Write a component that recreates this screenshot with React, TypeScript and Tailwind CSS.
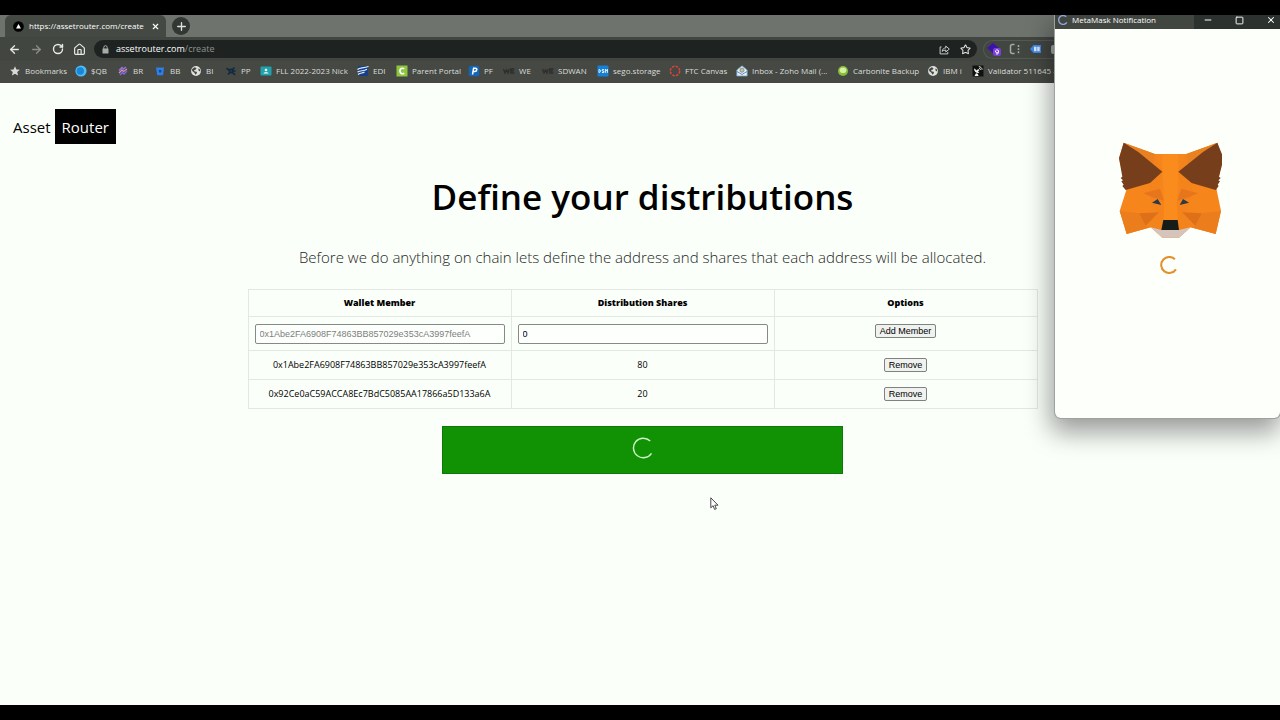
import type { ReactNode } from "react";
import {
  ArrowLeft,
  ArrowRight,
  House,
  Minus,
  Plus,
  RotateCw,
  Square,
  Star,
  X,
} from "lucide-react";

const StarSolid = () => (
  <svg viewBox="0 0 12 12" className="size-3" fill="#d9dbd7">
    <path d="M6 1.2 7.400 4.500l3.500.3-2.700 2.300.9 3.400L6 8.700 2.900 10.500l.9-3.400-2.700-2.300 3.500-.3z" />
  </svg>
);

const GlobeSolid = () => (
  <svg viewBox="0 0 12 12" className="size-3">
    <circle cx="6" cy="6" r="4.9" fill="#dfe1dd" />
    <path d="M2 4.2 4.5 2.3l2 .6-.6 1.5-1.8.9.6 1.2 2 .3.3 1.3-1.5 1.6-1.1-1.9L2.2 6zM8.2 3.6l1.7.6.3 2.3-1.5-.7z" fill="#454843" />
  </svg>
);

const DarkMark = () => (
  <svg viewBox="0 0 12 12" className="size-3" fill="none" stroke="#2b2e2b" strokeWidth="1.3">
    <path d="M.5 4 2 8l1.5-3L5 8l1.2-4M11.5 4H7.8v4h3.700M7.800 6h3" />
  </svg>
);

const bookmarks: { label: string; icon: ReactNode; width: string }[] = [
  { label: "Bookmarks", width: "w-[66px]", icon: <StarSolid /> },
  {
    label: "$QB",
    width: "w-[42px]",
    icon: (
      <svg viewBox="0 0 12 12" className="size-3">
        <circle cx="6" cy="6" r="5.6" fill="#4dbdf5" />
        <circle cx="5.300" cy="6" r="3.7" fill="#1a86d8" />
      </svg>
    ),
  },
  {
    label: "BR",
    width: "w-[37px]",
    icon: (
      <svg viewBox="0 0 12 12" className="size-3" fill="none" strokeWidth="1.3">
        <path d="m2 5.5 3-3 1.5 1.5 2.5-2" stroke="#8f7bea" />
        <path d="m2 8 3-3 1.5 1.5L10 4" stroke="#e48ac8" />
        <path d="m3 10 2.5-2.5L7 9l3-3" stroke="#7c6ee0" />
      </svg>
    ),
  },
  {
    label: "BB",
    width: "w-[36px]",
    icon: (
      <svg viewBox="0 0 12 12" className="size-3">
        <path d="M2 2.5h8L9 10.2H3.2z" fill="#2d7fea" />
        <path d="M4.7 5h2.8L7 7.6H5.2z" fill="#16458f" />
      </svg>
    ),
  },
  { label: "BI", width: "w-[35px]", icon: <GlobeSolid /> },
  {
    label: "PP",
    width: "w-[35px]",
    icon: (
      <svg viewBox="0 0 12 12" className="size-3" stroke="#10293c" strokeWidth="1.6" fill="none">
        <path d="M1.5 3.5 6 6l4 4M3 9.5 6 6l3.5-3.5M6 6h4.5" />
        <circle cx="6" cy="6" r="1.6" fill="#1b4f78" />
      </svg>
    ),
  },
  {
    label: "FLL 2022-2023 Nick",
    width: "w-[97px]",
    icon: (
      <svg viewBox="0 0 12 12" className="size-3">
        <rect x=".5" y="1.5" width="11" height="9" rx="1" fill="#1fa3ad" />
        <circle cx="6" cy="5" r="1.3" fill="#fff" />
        <path d="M3.4 8.6c.3-1.7 4.9-1.7 5.2 0z" fill="#fff" />
      </svg>
    ),
  },
  {
    label: "EDI",
    width: "w-[39px]",
    icon: (
      <svg viewBox="0 0 12 12" className="size-3">
        <path d="M1 1h10v10H2z" fill="#153f86" />
        <path d="M.5 4.5C3 2.5 6 3.5 11.5 1.5M.5 7C4 5 6 6.5 10 4.2M1 9.5c3-2 4-1 6.5-2.5" stroke="#e7f0fa" strokeWidth="1.2" fill="none" />
      </svg>
    ),
  },
  {
    label: "Parent Portal",
    width: "w-[72px]",
    icon: (
      <svg viewBox="0 0 12 12" className="size-3">
        <rect x=".5" y=".5" width="11" height="11" fill="#8dc63f" />
        <path d="M8.3 3.8C6 2.4 3.9 3.9 3.9 6s2.1 3.6 4.4 2.2" stroke="#fff" strokeWidth="1.7" fill="none" />
      </svg>
    ),
  },
  {
    label: "PF",
    width: "w-[35px]",
    icon: (
      <svg viewBox="0 0 12 12" className="size-3">
        <rect x=".8" y=".8" width="10.4" height="10.4" rx="2" fill="#1467b8" />
        <path d="M4.5 9.5 5.6 3.2h1.7c2.4.2 1.7 3.3-.5 3.3H5.2" stroke="#fff" strokeWidth="1.5" fill="none" />
      </svg>
    ),
  },
  { label: "WE", width: "w-[39px]", icon: <DarkMark /> },
  { label: "SDWAN", width: "w-[55px]", icon: <DarkMark /> },
  {
    label: "sego.storage",
    width: "w-[72px]",
    icon: (
      <svg viewBox="0 0 12 12" className="size-3">
        <rect x=".5" y=".5" width="11" height="11" rx="1" fill="#1580d8" />
        <path d="M2 4.5v3c2 .2 2-3.2 0-3M6.9 4.5H5.3V6h1.5v1.5H5M8.4 7.8V4.3l1 1.5 1-1.5v3.5" stroke="#fff" strokeWidth=".9" fill="none" />
      </svg>
    ),
  },
  {
    label: "FTC Canvas",
    width: "w-[67px]",
    icon: (
      <svg viewBox="0 0 12 12" className="size-3" fill="none" stroke="#d8453b">
        <circle cx="6" cy="6" r="4.7" strokeWidth="1.5" strokeDasharray="2.6 1.09" />
      </svg>
    ),
  },
  {
    label: "Inbox - Zoho Mail (...",
    width: "w-[101px]",
    icon: (
      <svg viewBox="0 0 12 12" className="size-3">
        <path d="M.8 5 6 .8 11.2 5v6H.8z" fill="#e8f0f6" stroke="#6c9ac0" strokeWidth=".8" />
        <circle cx="6" cy="5.2" r="2.1" fill="#d8b982" stroke="#4c82b0" strokeWidth=".7" />
        <path d="m1 6.5 5 3 5-3" fill="none" stroke="#4c82b0" strokeWidth=".9" />
      </svg>
    ),
  },
  {
    label: "Carbonite Backup",
    width: "w-[90px]",
    icon: (
      <svg viewBox="0 0 12 12" className="size-3">
        <circle cx="6" cy="6" r="5" fill="#86bd3a" />
        <ellipse cx="6" cy="5.2" rx="3.300" ry="2.8" fill="#d9efa0" />
      </svg>
    ),
  },
  { label: "IBM i", width: "w-[45px]", icon: <GlobeSolid /> },
  {
    label: "Validator 511645 -",
    width: "w-[90px]",
    icon: (
      <svg viewBox="0 0 12 12" className="size-3">
        <rect x=".5" y=".5" width="11" height="11" fill="#101210" />
        <path d="M2 3.2c0 3.5 2.2 5.2 5.4 4.7L6 6.5 7.5 5 6 4 4.8 5.5zM4 8.3 2.5 11h4L5.8 8.8z" fill="#f4f6f3" />
        <path d="M6.8 1.6c1.9.1 3.2 1.4 3.3 3.2M7 3.2c1 .1 1.5.7 1.6 1.6" stroke="#f4f6f3" strokeWidth=".9" fill="none" />
      </svg>
    ),
  },
];

const members = [
  { address: "0x1Abe2FA6908F74863BB857029e353cA3997feefA", shares: 80 },
  { address: "0x92Ce0aC59ACCA8Ec7BdC5085AA17866a5D133a6A", shares: 20 },
];

function TabStrip() {
  return (
    <div className="flex h-[22px] items-stretch bg-[#6f736e]">
      <div className="ml-[5px] flex w-[161px] items-center rounded-t-md bg-[#454943] px-2 text-[8px] text-white">
        <svg viewBox="0 0 12 12" className="mr-[5px] size-[11px] shrink-0">
          <circle cx="6" cy="6" r="5.8" fill="#000" />
          <path d="m6 3.3 2.7 4.9H3.3z" fill="#fff" />
        </svg>
        <span className="flex-1 whitespace-nowrap">https://assetrouter.com/create</span>
        <button aria-label="Close tab" className="-mr-[3px] p-px">
          <X className="size-[9px]" strokeWidth={3} />
        </button>
      </div>
      <button
        aria-label="New tab"
        className="ml-[6px] flex size-[18px] items-center justify-center self-center rounded-full bg-[#333733] text-[#dfe1dd]"
      >
        <Plus className="size-[13px]" strokeWidth={2.5} />
      </button>
    </div>
  );
}

function Toolbar() {
  return (
    <div className="flex h-6 items-center bg-[#424641] pl-2 text-[#e8eae6]">
      <div className="flex w-[86px] items-center gap-[9px]">
        <button aria-label="Back">
          <ArrowLeft className="size-[13px]" strokeWidth={2.4} />
        </button>
        <button aria-label="Forward" className="text-[#8a8d88]">
          <ArrowRight className="size-[13px]" strokeWidth={2.4} />
        </button>
        <button aria-label="Reload">
          <RotateCw className="size-3" strokeWidth={2.8} />
        </button>
        <button aria-label="Home">
          <House className="size-[13px]" strokeWidth={2.2} />
        </button>
      </div>
      <div className="flex h-[18px] w-[883px] items-center rounded-full bg-[#1e2322] pr-[6px] pl-[7px]">
        <svg viewBox="0 0 9 9" className="mr-[6px] size-[9px]">
          <rect x="1.500" y="3.500" width="6" height="5" rx=".5" fill="#a9ada8" />
          <path d="M2.800 4V2.400a1.700 1.700 0 0 1 3.400 0V4" fill="none" stroke="#a9ada8" />
        </svg>
        <a href="#address" className="flex-1 text-[9px] text-[#8f938f]">
          <span className="text-white">assetrouter.com</span>/create
        </a>
        <button aria-label="Share" className="mr-[10px]">
          <svg viewBox="0 0 12 12" className="size-[11px]" fill="none" stroke="#d5d8d3">
            <path d="M2.8 3.2H1.2v7.6h8.4V8.6" />
            <path d="M3.5 8c.2-2.4 1.6-3.7 3.9-3.7V2.2l3.8 3.3-3.8 3.2V6.6C5.700 6.600 4.500 7 3.500 8z" strokeLinejoin="round" />
          </svg>
        </button>
        <button aria-label="Bookmark this page">
          <Star className="size-[11px]" strokeWidth={2.2} />
        </button>
      </div>
      <div className="ml-[6px] flex h-[19px] flex-1 items-center gap-[9px] rounded-l-full border border-r-0 border-[#555954] pl-[3px]">
        <svg viewBox="0 0 14 14" className="size-[14px]">
          <path d="M0 6 6 1l6 5-5 6z" fill="#3d12a8" />
          <rect x="6" y="6" width="8" height="8" rx="2" fill="#7a3fd8" />
          <path d="M11.500 9.200a1.500 1.500 0 1 0-.3 1.100M11.500 9v1.500c0 1.400-1.400 1.800-2.500 1.300" stroke="#fff" fill="none" />
        </svg>
        <svg viewBox="0 0 12 12" className="-ml-px size-3" fill="none" stroke="#a7aaa6" strokeWidth="1.500">
          <path d="M5.500 1.500H3.500Q1.500 1.500 1.500 3.500v5q0 2 2 2h2M9.500 2v2M9.500 5.200v1.800M9.500 8.300v2" />
        </svg>
        <svg viewBox="0 0 12 12" className="size-3">
          <path d="M0 6 3.500 2H11v8H3.500z" fill="#3f87e8" />
          <path d="M4 3.700h2.500v4.600H4zM7.200 3.700h2.500v4.600H7.200z" fill="#d7e7fb" />
        </svg>
        <svg viewBox="0 0 12 12" className="size-3">
          <rect y="2" width="11" height="9" rx="2" fill="#a7aaa6" />
        </svg>
      </div>
    </div>
  );
}

function Fox() {
  return (
    <svg viewBox="57 36 312 291" className="h-[97px] w-[104px]" role="img" aria-label="MetaMask">
      <path d="M74 38 168 72h94l93-34 14 47-16 95 13 63-16 69-75-20-35 31h-50l-35-31-72 20-21-69 20-63-22-95z" fill="#f6851b" />
      <path d="M74 38 168 72l22 53zM355 38 262 72l-24 53z" fill="#ea8120" />
      <path d="M190 72h48v53l-3 70 2 75h-44l2-75-5-70z" fill="#f98c1c" />
      <path d="m168 72 22 53-9 48 14 42-2 57-30-34-14-50zM262 72l-24 53 9 48-14 42 4 57 30-34 14-50z" fill="#f5831b" />
      <path d="m133 190 50-14 12 36-34-10zM297 190l-50-14-12 36 34-10z" fill="#e5761b" />
      <path d="m120 250 60-3-40 41zM309 250l-60-3 40 41z" fill="#df701a" />
      <path d="m62 243 58 7 20 38 15 4-72 20zM366 243l-57 7-20 38-14 4 75 20z" fill="#ec7d1c" />
      <path d="m180 247-40 41 15 4 32 8 6-30zM249 247l40 41-14 4-35 8-3-30z" fill="#f3831b" />
      <path d="M74 38 118 66l72 59-37 34-73 21-10-12 4-4-7-10 5-3-7-7 5-4-10-55z" fill="#763e1a" />
      <path d="M355 38 312 66l-74 59 40 34 72 21 9-12-3-4 7-10-5-3 7-7-5-4 14-55z" fill="#763e1a" />
      <path d="m159 218 17-11 11 18zM270 218l-18-11-10 18z" fill="#2b3a45" />
      <path d="m155 292 32 8h53l35-8-35 31h-50z" fill="#d5c4bb" />
      <path d="m193 270-6 30h53l-4-30z" fill="#161d18" />
    </svg>
  );
}

function Spinner({ className }: { className: string }) {
  return (
    <svg viewBox="0 0 22 22" className={className} fill="none" stroke="currentColor">
      <path d="M18.200 4A9.800 9.800 0 1 0 19.500 16.300" />
    </svg>
  );
}

function MetaMaskWindow() {
  return (
    <aside className="absolute top-0 right-0 flex h-[403px] w-[225px] flex-col overflow-hidden rounded-b-md bg-[#fcfffa] shadow-[-2px_12px_26px_2px_rgba(0,0,0,0.4)] ring-1 ring-[#9ca29c]">
      <div className="flex h-[14px] items-stretch bg-[#2c322d] text-white">
        <div className="flex w-[139px] items-center bg-[#424641] pb-1 pl-[3px] text-[8px] leading-[10px]">
          <Spinner className="mr-1 size-[10px] stroke-3 text-[#8fa6d8]" />
          MetaMask Notification
        </div>
        <div className="flex flex-1 items-center justify-between pr-1 pb-1 pl-[9px]">
          <button aria-label="Minimize"><Minus className="size-[10px]" strokeWidth={2.5} /></button>
          <button aria-label="Maximize"><Square className="size-[9px]" strokeWidth={2.5} /></button>
          <button aria-label="Close"><X className="size-[10px]" strokeWidth={2.5} /></button>
        </div>
      </div>
      <div className="flex flex-col items-center pt-[113px] pl-[5px]">
        <Fox />
        <Spinner className="mt-[17px] mr-[2px] size-[18px] stroke-[2.5] text-[#e3912c]" />
      </div>
    </aside>
  );
}

const cell = "border border-[#e3e8e2] px-[6px] text-center";
const smallButton =
  "rounded-[2px] border border-[#7f837f] bg-[#eff2ee] px-1 font-['Liberation_Sans',sans-serif] text-[9px] leading-3 text-black";
const field =
  "block h-5 w-full rounded-[2px] border border-[#868a86] bg-[#fdfffc] px-1 font-['Liberation_Sans',sans-serif] text-[9px] text-black placeholder:text-[#7c807c]";

export default function App() {
  return (
    <div className="flex min-h-screen flex-col bg-black py-[15px] font-['Open_Sans','Noto_Sans',sans-serif] text-black">
      <div className="relative flex flex-1 flex-col overflow-hidden bg-[#fbfffa]">
        <header>
          <TabStrip />
          <Toolbar />
          <nav className="flex h-[22px] items-center overflow-hidden bg-[#454843] pb-[3px] pl-[9px] text-[8px] text-[#dcdeda]">
            {bookmarks.map(({ label, icon, width }) => (
              <a key={label} href="#bookmark" className={`flex shrink-0 items-center gap-1 whitespace-nowrap ${width}`}>
                <span className="shrink-0">{icon}</span>
                {label}
              </a>
            ))}
          </nav>
        </header>

        <main className="flex flex-1 flex-col">
          <a href="#home" className="mt-[26px] ml-[13px] flex items-baseline gap-1 self-start text-[15px]">
            Asset
            <span className="bg-black px-[7px] pt-[7px] pb-[5px] leading-[23px] text-white">Router</span>
          </a>

          <div className="flex flex-col items-center pl-[5px]">
            <h1 className="mt-[27px] text-[35px] leading-[52px] font-semibold">Define your distributions</h1>
            <p className="mt-[22px] text-[15px] leading-6 font-light text-[#1c1e1c]">
              Before we do anything on chain lets define the address and shares that each address will be allocated.
            </p>

            <table className="mt-5 w-[790px] table-fixed border-collapse text-[9px]">
              <thead>
                <tr className="h-[27px]">
                  <th className={`${cell} font-extrabold`}>Wallet Member</th>
                  <th className={`${cell} font-extrabold`}>Distribution Shares</th>
                  <th className={`${cell} font-extrabold`}>Options</th>
                </tr>
              </thead>
              <tbody>
                <tr className="h-[34px]">
                  <td className={cell}>
                    <input aria-label="Wallet Member" className={field} placeholder="0x1Abe2FA6908F74863BB857029e353cA3997feefA" />
                  </td>
                  <td className={cell}>
                    <input aria-label="Distribution Shares" className={field} defaultValue="0" />
                  </td>
                  <td className={`${cell} pt-[7px] align-top`}>
                    <button className={smallButton}>Add Member</button>
                  </td>
                </tr>
                {members.map(({ address, shares }) => (
                  <tr key={address} className="h-[29px]">
                    <td className={cell}>{address}</td>
                    <td className={cell}>{shares}</td>
                    <td className={cell}>
                      <button className={smallButton}>Remove</button>
                    </td>
                  </tr>
                ))}
              </tbody>
            </table>

            <button
              aria-label="Create distribution"
              className="mt-[17px] flex h-12 w-[401px] items-center justify-center border border-[#0b7a06] bg-[#119104] pb-1 text-[#c9f5c3]"
            >
              <Spinner className="size-[22px] stroke-[1.5]" />
            </button>
          </div>
        </main>

        <MetaMaskWindow />
        <svg viewBox="0 0 10 14" className="absolute top-[482px] left-[710px] h-[14px] w-[10px]" fill="#fff" stroke="#333" strokeWidth=".9">
          <path d="M.8.8v10l2.300-2.100 1.500 3.700 1.700-.7-1.500-3.500h3.200z" />
        </svg>
      </div>
    </div>
  );
}
